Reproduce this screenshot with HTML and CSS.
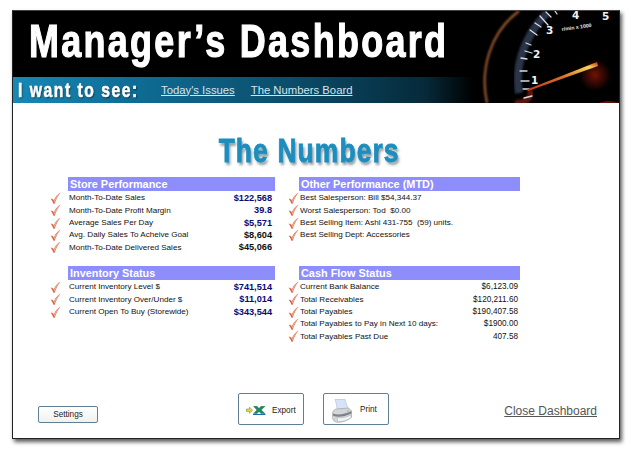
FILE: index.html
```html
<!DOCTYPE html>
<html lang="en">
<head>
<meta charset="utf-8">
<title>Manager's Dashboard</title>
<link rel="stylesheet" href="styles.css">
</head>
<body>
<svg class="defs" width="0" height="0" aria-hidden="true">
  <defs>
    <symbol id="check" viewBox="0 0 12 13">
      <path d="M0.6 7.4 C2 6.8 3.4 7.6 4.2 9.1 C5.6 5.7 8 2.6 11.6 0.5 C8.9 3.6 6.8 7.6 5.2 12.7 C4.6 12.9 4.1 12.9 3.6 12.6 C3 10.7 2 8.8 0.6 7.4 Z" fill="#d9694a"/>
      <path d="M4.3 10 C5.6 6.6 7.6 3.8 10.4 1.6 C8.2 4.4 6.4 7.6 5 11.6 Z" fill="#f0b49e"/>
    </symbol>
  </defs>
</svg>
<div class="window">
  <header class="banner">
    <h1 class="banner-title"><span class="squeeze">Manager’s Dashboard</span></h1>
    <nav class="nav">
      <span class="nav-label"><span class="squeeze">I want to see:</span></span>
      <a class="nav-link" href="#">Today's Issues</a>
      <a class="nav-link" href="#">The Numbers Board</a>
    </nav>
    <svg class="gauge" viewBox="0 0 150 92" aria-hidden="true">
      <defs>
        <linearGradient id="fade" x1="0" x2="1" y1="0" y2="0">
          <stop offset="0" stop-color="#000" stop-opacity="0"/>
          <stop offset="0.12" stop-color="#000"/>
        </linearGradient>
        <linearGradient id="needle" x1="0" x2="1" y1="1" y2="0">
          <stop offset="0" stop-color="#c8351e"/>
          <stop offset="0.5" stop-color="#d9702a"/>
          <stop offset="0.85" stop-color="#f4d650"/>
          <stop offset="1" stop-color="#c0301c"/>
        </linearGradient>
        <radialGradient id="hub" cx="0.5" cy="0.5" r="0.5">
          <stop offset="0" stop-color="#701206"/>
          <stop offset="1" stop-color="#701206" stop-opacity="0"/>
        </radialGradient>
        <filter id="soft"><feGaussianBlur stdDeviation="0.4"/></filter>
        <filter id="softer"><feGaussianBlur stdDeviation="1.2"/></filter>
      </defs>
      <rect width="150" height="92" fill="url(#fade)"/>
      <path d="M18 92 C11 60 20 22 50 0" fill="none" stroke="#a05c30" stroke-width="2.2" filter="url(#softer)"/>
      <path d="M50 82 C46 60 52 28 78 2" fill="none" stroke="#2c3648" stroke-width="8" filter="url(#softer)"/>
      <path d="M46 92 C56 92 66 86 60 78" fill="none" stroke="#5a1408" stroke-width="6" filter="url(#softer)"/>
      <g stroke="#d6dbe4" stroke-width="1.3" stroke-linecap="round" filter="url(#soft)">
        <path d="M55 87 L63 85"/><path d="M54 78 L60 78"/><path d="M52 70 L60 70"/><path d="M51 60 L58 60"/>
        <path d="M52 47 L58 48"/><path d="M56 40 L63 42"/><path d="M57 32 L62 34"/><path d="M61 19 L68 24"/>
        <path d="M66 12 L72 16"/><path d="M71 5 L79 14"/><path d="M77 1 L82 6"/><path d="M86 0 L88 3"/>
      </g>
      <ellipse cx="126" cy="64" rx="16" ry="16" fill="url(#hub)"/>
      <path d="M58 78.5 L128 51 L129 55 L59 80 Z" fill="url(#needle)" filter="url(#soft)"/>
      <path d="M130 92 C138 89 144 90 150 92 Z" fill="#5a1408"/>
      <text class="gauge-num" x="64" y="47">2</text>
      <text class="gauge-num" x="62" y="73">1</text>
      <text class="gauge-num" x="77" y="23">3</text>
      <text class="gauge-num" x="103" y="8">4</text>
      <text class="gauge-num" x="133" y="9">5</text>
      <text class="gauge-small" x="93" y="20" transform="rotate(-8 93 20)">r/min x 1000</text>
    </svg>
  </header>

  <main class="content">
    <h2 class="numbers-title"><span class="squeeze">The Numbers</span></h2>

    <div class="panels">
      <section class="panel">
        <h3 class="panel-head">Store Performance</h3>
        <ul class="rows">
          <li class="row"><svg class="tick"><use href="#check"/></svg><span class="label">Month-To-Date Sales</span><b class="val navy">$122,568</b></li>
          <li class="row"><svg class="tick"><use href="#check"/></svg><span class="label">Month-To-Date Profit Margin</span><b class="val navy">39.8</b></li>
          <li class="row"><svg class="tick"><use href="#check"/></svg><span class="label">Average Sales Per Day</span><b class="val navy">$5,571</b></li>
          <li class="row"><svg class="tick"><use href="#check"/></svg><span class="label">Avg. Daily Sales To Acheive Goal</span><b class="val">$8,604</b></li>
          <li class="row"><svg class="tick"><use href="#check"/></svg><span class="label">Month-To-Date Delivered Sales</span><b class="val">$45,066</b></li>
        </ul>
      </section>

      <section class="panel panel-right">
        <h3 class="panel-head">Other Performance (MTD)</h3>
        <ul class="rows">
          <li class="row"><svg class="tick"><use href="#check"/></svg><span class="label">Best Salesperson: Bill $54,344.37</span></li>
          <li class="row"><svg class="tick"><use href="#check"/></svg><span class="label">Worst Salesperson: Tod&nbsp; $0.00</span></li>
          <li class="row"><svg class="tick"><use href="#check"/></svg><span class="label">Best Selling Item: Ashl 431-755&nbsp; (59) units.</span></li>
          <li class="row"><svg class="tick"><use href="#check"/></svg><span class="label">Best Selling Dept: Accessories</span></li>
        </ul>
      </section>

      <section class="panel">
        <h3 class="panel-head">Inventory Status</h3>
        <ul class="rows">
          <li class="row"><svg class="tick"><use href="#check"/></svg><span class="label">Current Inventory Level $</span><b class="val navy">$741,514</b></li>
          <li class="row"><svg class="tick"><use href="#check"/></svg><span class="label">Current Inventory Over/Under $</span><b class="val navy">$11,014</b></li>
          <li class="row"><svg class="tick"><use href="#check"/></svg><span class="label">Current Open To Buy (Storewide)</span><b class="val navy">$343,544</b></li>
        </ul>
      </section>

      <section class="panel panel-right">
        <h3 class="panel-head">Cash Flow Status</h3>
        <ul class="rows">
          <li class="row"><svg class="tick"><use href="#check"/></svg><span class="label">Current Bank Balance</span><span class="val">$6,123.09</span></li>
          <li class="row"><svg class="tick"><use href="#check"/></svg><span class="label">Total Receivables</span><span class="val">$120,211.60</span></li>
          <li class="row"><svg class="tick"><use href="#check"/></svg><span class="label">Total Payables</span><span class="val">$190,407.58</span></li>
          <li class="row"><svg class="tick"><use href="#check"/></svg><span class="label">Total Payables to Pay in Next 10 days:</span><span class="val">$1900.00</span></li>
          <li class="row"><svg class="tick"><use href="#check"/></svg><span class="label">Total Payables Past Due</span><span class="val">407.58</span></li>
        </ul>
      </section>
    </div>

    <footer class="actions">
      <button class="btn btn-settings" type="button">Settings</button>
      <div class="big-btns">
        <button class="btn btn-big btn-export" type="button">
          <svg class="ico-export" viewBox="0 0 20 9" aria-hidden="true">
            <path d="M0.5 3 H3.5 V1.2 L6.6 4.2 L3.5 7.2 V5.4 H0.5 Z" fill="#dce04a" stroke="#8a8a24" stroke-width="0.6"/>
            <path d="M7.5 0.3 H11 L13 2.6 L15 0.3 H19 L15.2 4 L19 7.6 H15 L13 5.4 L11 7.6 H7.5 L11 4 Z" fill="#1d8a5c" stroke="#0f5a3c" stroke-width="0.4"/>
            <rect x="7" y="8" width="12.5" height="1" fill="#1d6ab0"/>
          </svg>
          <span>Export</span>
        </button>
        <button class="btn btn-big btn-print" type="button">
          <svg class="ico-print" viewBox="0 0 20 24" aria-hidden="true">
            <path d="M3 0.5 L13 0.5 C14 4 15 7 16.5 9.5 L5 10.5 C5 7 4 3.5 3 0.5 Z" fill="#d7e3f6" stroke="#9fb1cc" stroke-width="0.5"/>
            <path d="M0.5 14 C1 11 3 10 5 10 L16 9 C19 10 19.7 12 19.7 14 L19.5 18.5 C15 22 9 23.7 5.5 23.3 C2 23 0.5 21 0.5 18.5 Z" fill="#d3d5d9" stroke="#8e9298" stroke-width="0.5"/>
            <path d="M1 14.5 C6 16.5 13 15 19.5 12 L19.5 14.5 C13 17.5 6 19 1 16.8 Z" fill="#7f8389"/>
            <path d="M5.5 18.5 C10 19.5 15 18 19 16 L19 18.8 C15 21.5 10 23 5.5 22.5 Z" fill="#f2f3f5" stroke="#9a9ea4" stroke-width="0.4"/>
            <circle cx="16" cy="12" r="0.7" fill="#5fbf5f"/>
          </svg>
          <span>Print</span>
        </button>
      </div>
      <a class="close-link" href="#">Close Dashboard</a>
    </footer>
  </main>
</div>
</body>
</html>
```
FILE: styles.css
```css
* { box-sizing: border-box; }

html, body {
  margin: 0;
  height: 100%;
  background: #fff;
  overflow: hidden;
}

body {
  padding: 10px 0 0 12px;
  font-family: "Liberation Sans", Arial, sans-serif;
}

.defs { position: absolute; }

.window {
  width: 608px;
  height: 429px;
  background: #fff;
  border: 1px solid #222;
  border-top-color: #444;
  box-shadow: 2px 3px 4px rgba(0, 0, 0, 0.65);
  display: flex;
  flex-direction: column;
}

/* condensed display type: no narrow face is installed */
.squeeze {
  display: inline-block;
  white-space: nowrap;
  transform-origin: left center;
}

/* banner */
.banner {
  position: relative;
  height: 92px;
  background: #000;
  overflow: hidden;
  flex: none;
}

.banner-title {
  margin: 0;
  height: 66px;
  padding: 4px 0 0 16px;
  color: #fff;
  font-weight: 700;
  font-size: 47px;
  line-height: 52px;
  white-space: nowrap;
}

.banner-title .squeeze {
  letter-spacing: 3px;
  -webkit-text-stroke: 1.2px #fff;
  transform: scaleX(0.765);
}

.nav {
  height: 26px;
  padding: 0 0 1px 5px;
  display: flex;
  align-items: center;
  background: linear-gradient(90deg, #1888b4 0%, #0f6f98 18%, #0b4e6c 45%, #062a3a 68%, #000 76%);
}

.nav-label {
  flex: none;
  width: 143px;
  color: #fff;
  font-weight: 700;
  font-size: 21px;
  line-height: 24px;
}

.nav-label .squeeze {
  letter-spacing: 2px;
  -webkit-text-stroke: 0.6px #fff;
  text-shadow: 1px 1px 2px #02222f;
  transform: scaleX(0.75);
}

.nav-link {
  color: #d5e5ee;
  font-size: 11.3px;
  text-decoration: underline;
  margin-right: 16px;
}

.gauge {
  position: absolute;
  right: 0;
  top: 0;
  width: 150px;
  height: 92px;
}

.gauge-num {
  fill: #f0f2f6;
  font: 700 10.5px "DejaVu Sans", sans-serif;
}

.gauge-small {
  fill: #e6e8ee;
  font: 700 5.2px "Liberation Sans", sans-serif;
}

/* content */
.content {
  flex: 1;
  display: flex;
  flex-direction: column;
  padding: 29px 22px 13px 25px;
  min-height: 0;
}

.numbers-title {
  margin: 0;
  text-align: center;
  padding-right: 16px;
  color: #1b8ebf;
  font-weight: 700;
  font-size: 33px;
  line-height: 38px;
}

.numbers-title .squeeze {
  letter-spacing: 1.4px;
  -webkit-text-stroke: 0.8px #1b8ebf;
  text-shadow: 2px 3px 3px rgba(30, 50, 60, 0.5);
  transform: scaleX(0.8);
  transform-origin: center;
}

.panels {
  margin: 7px 0 0 12px;
  display: grid;
  grid-template-columns: 225px 232px;
  grid-template-rows: 89px auto;
  column-gap: 13px;
}

.panel-head {
  margin: 0 0 0 18px;
  height: 14px;
  background: #8d8dfc;
  color: #fff;
  font-size: 10.9px;
  font-weight: 700;
  line-height: 14px;
  padding-left: 2px;
}

.panel-right .panel-head { margin-left: 11px; }

.rows {
  list-style: none;
  margin: 0.6px 0 0;
  padding: 0;
}

.row {
  height: 12.4px;
  display: flex;
  align-items: center;
  font-size: 8.1px;
  color: #111;
  white-space: nowrap;
}

.tick {
  width: 11px;
  height: 12px;
  flex: none;
  margin-right: 8px;
}

.panel-right .tick { margin-right: 1px; }

.val {
  margin-left: auto;
  padding-right: 3px;
}

span.val { font-weight: 400; font-size: 8.2px; padding-right: 2px; }
b.val { font-size: 9.2px; }
.navy { color: #0a0a78; }

/* footer */
.actions {
  margin-top: auto;
  display: flex;
  align-items: flex-end;
}

.btn {
  font-family: "Liberation Sans", Arial, sans-serif;
  font-size: 8.2px;
  color: #222;
  background: linear-gradient(#fff, #f1f1ec);
  border: 1px solid #5f7f94;
  border-radius: 2px;
}

.btn-settings {
  width: 60px;
  height: 17px;
  margin: 0 140px 2px 0;
  padding: 0;
}

.big-btns {
  display: flex;
  gap: 19px;
}

.btn-big {
  width: 66px;
  height: 32px;
  display: flex;
  align-items: center;
  padding: 0;
  background: #fff;
}

.btn-export { padding: 3px 0 0 7px; gap: 6px; }
.btn-print { padding: 0 0 0 8px; gap: 8px; }

.ico-export { width: 20px; height: 9px; }
.ico-print { width: 20px; height: 24px; margin-top: 3px; }

.close-link {
  margin: 0 0 7px auto;
  color: #555;
  font-size: 12px;
  text-decoration: underline;
}
```
